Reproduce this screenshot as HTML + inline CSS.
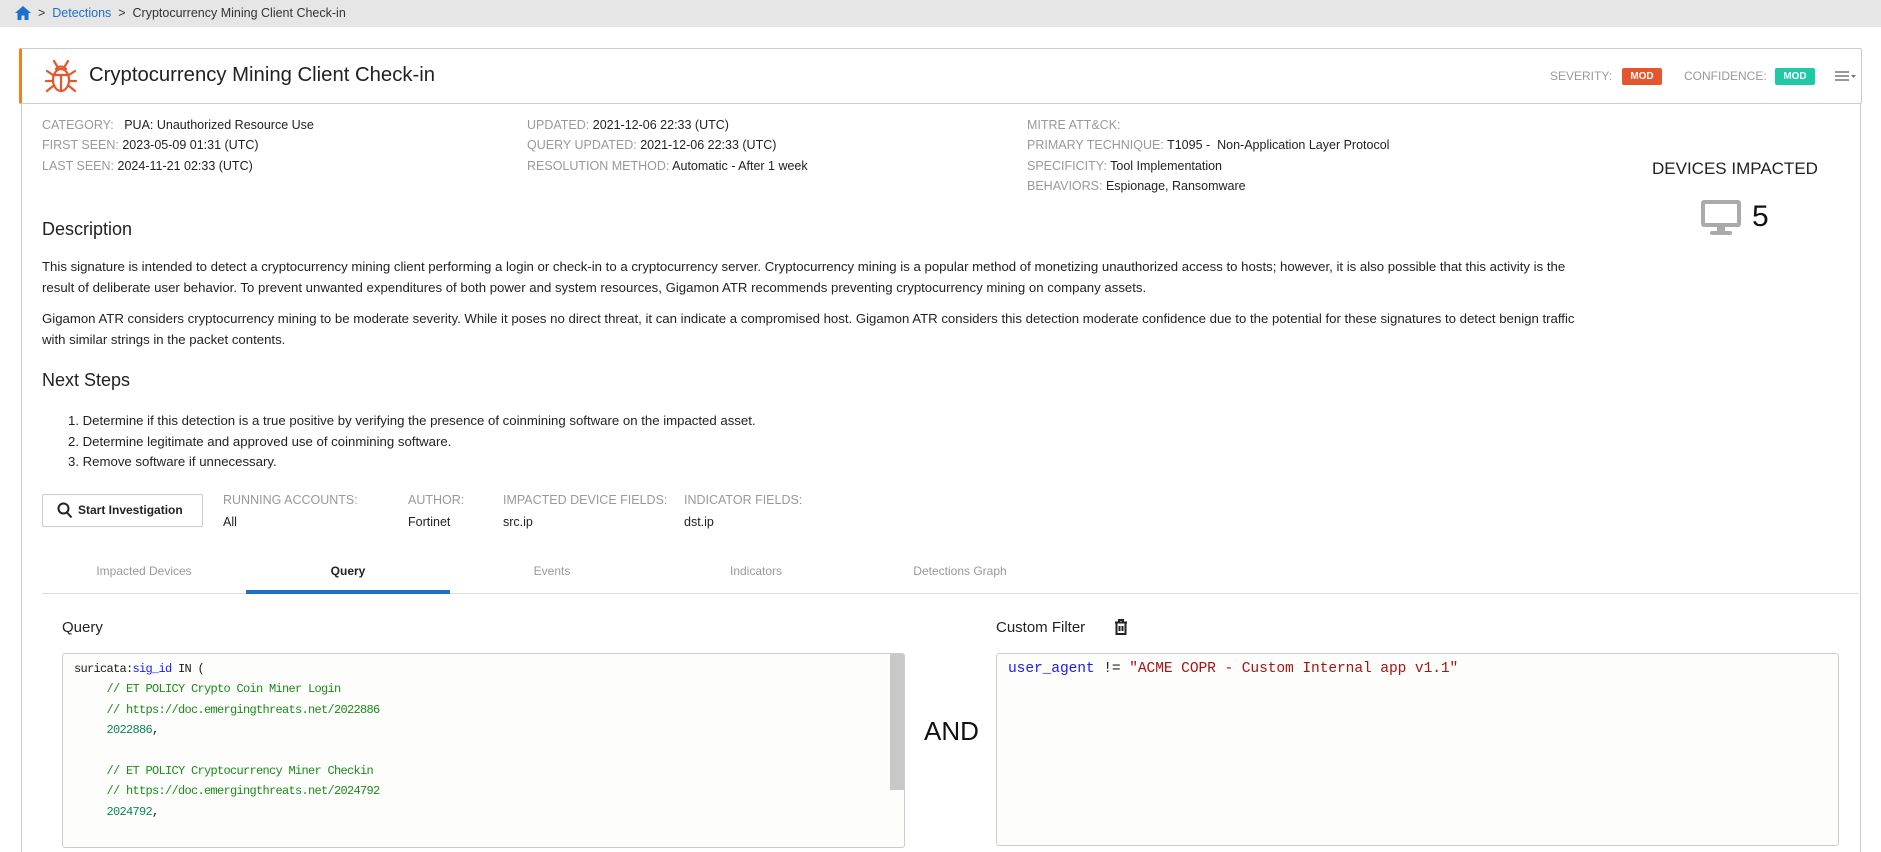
<!DOCTYPE html>
<html><head><meta charset="utf-8"><style>
*{margin:0;padding:0;box-sizing:border-box}
body{width:1881px;height:852px;overflow:hidden;background:#fff;font-family:"Liberation Sans",sans-serif;color:#222;position:relative}
.a{position:absolute;white-space:nowrap}
.lbl{color:#999}
.m{font-size:12.5px;line-height:16px}
.p{font-size:13.2px;color:#222}
.code{font-family:"Liberation Mono",monospace;font-size:12px;letter-spacing:-0.7px;color:#1a1a1a}
.g{color:#1b8a1b}
.tab{position:absolute;top:564px;width:204px;text-align:center;font-size:12px;color:#999}
</style></head><body>
<div class="a" style="left:0;top:0;width:1881px;height:27px;background:#e6e6e6"></div>
<svg class="a" style="left:14px;top:5px" width="18" height="16" viewBox="0 0 18 16"><path d="M9 1 L1 8 H3.5 V15 H7.5 V10.5 H10.5 V15 H14.5 V8 H17 Z" fill="#1e6fc9"/></svg>
<div class="a" style="left:38px;top:6px;font-size:12.5px;color:#333">&gt;&nbsp; <span style="color:#1e6fc9">Detections</span> &nbsp;&gt;&nbsp; Cryptocurrency Mining Client Check-in</div>

<div class="a" style="left:19px;top:48px;width:1843px;height:56px;border:1px solid #ccc;border-left:3px solid #f08020;border-radius:2px"></div>
<svg class="a" style="left:44px;top:58px" width="34" height="36" viewBox="0 0 34 36" fill="none" stroke="#e4572e" stroke-width="2.2" stroke-linecap="round"><ellipse cx="17" cy="22" rx="8" ry="11"/><path d="M9 17 H25 M17 17 V33 M12 11 Q17 6 22 11 M13 8 L10 3 M21 8 L24 3 M9 17 L3 13 M9 23 H2 M9 28 L3 33 M25 17 L31 13 M25 23 H32 M25 28 L31 33"/></svg>
<div class="a" style="left:89px;top:64px;font-size:20.3px;color:#222">Cryptocurrency Mining Client Check-in</div>
<div class="a" style="left:1550px;top:69px;font-size:12px;color:#999">SEVERITY:</div>
<div class="a" style="left:1622px;top:68px;width:40px;height:17px;background:#e4572e;border-radius:2px;color:#fff;font-size:10px;font-weight:bold;text-align:center;line-height:17px">MOD</div>
<div class="a" style="left:1684px;top:69px;font-size:12px;color:#999">CONFIDENCE:</div>
<div class="a" style="left:1775px;top:68px;width:40px;height:17px;background:#1fc9a6;border-radius:2px;color:#fff;font-size:10px;font-weight:bold;text-align:center;line-height:17px">MOD</div>
<svg class="a" style="left:1835px;top:70px" width="22" height="12"><path d="M0 2H14M0 6H14M0 10H14" stroke="#777" stroke-width="1.6"/><path d="M16 5H21L18.5 8Z" fill="#777"/></svg>

<div class="a" style="left:21px;top:103px;width:1px;height:749px;background:#ccc"></div>
<div class="a" style="left:1860px;top:103px;width:1px;height:749px;background:#ccc"></div>

<div class="a m" style="left:42px;top:117px"><span class="lbl">CATEGORY:</span>&nbsp;&nbsp; PUA: Unauthorized Resource Use</div>
<div class="a m" style="left:42px;top:137px"><span class="lbl">FIRST SEEN:</span> 2023-05-09 01:31 (UTC)</div>
<div class="a m" style="left:42px;top:158px"><span class="lbl">LAST SEEN:</span> 2024-11-21 02:33 (UTC)</div>
<div class="a m" style="left:527px;top:117px"><span class="lbl">UPDATED:</span> 2021-12-06 22:33 (UTC)</div>
<div class="a m" style="left:527px;top:137px"><span class="lbl">QUERY UPDATED:</span> 2021-12-06 22:33 (UTC)</div>
<div class="a m" style="left:527px;top:158px"><span class="lbl">RESOLUTION METHOD:</span> Automatic - After 1 week</div>
<div class="a m" style="left:1027px;top:117px"><span class="lbl">MITRE ATT&amp;CK:</span></div>
<div class="a m" style="left:1027px;top:137px"><span class="lbl">PRIMARY TECHNIQUE:</span> T1095 -&nbsp; Non-Application Layer Protocol</div>
<div class="a m" style="left:1027px;top:158px"><span class="lbl">SPECIFICITY:</span> Tool Implementation</div>
<div class="a m" style="left:1027px;top:178px"><span class="lbl">BEHAVIORS:</span> Espionage, Ransomware</div>

<div class="a" style="left:1652px;top:159px;font-size:17px;color:#222">DEVICES IMPACTED</div>
<svg class="a" style="left:1700px;top:199px" width="42" height="37" viewBox="0 0 42 37"><rect x="1" y="1" width="40" height="27" rx="3" fill="#aaa"/><rect x="5" y="5" width="32" height="19" fill="#fff"/><rect x="17" y="28" width="8" height="5" fill="#aaa"/><rect x="10" y="32" width="22" height="4" rx="2" fill="#aaa"/></svg>
<div class="a" style="left:1752px;top:200px;font-size:30px;color:#111">5</div>

<div class="a" style="left:42px;top:219px;font-size:18px">Description</div>
<div class="a p" style="left:42px;top:257px;line-height:20.5px">This signature is intended to detect a cryptocurrency mining client performing a login or check-in to a cryptocurrency server. Cryptocurrency mining is a popular method of monetizing unauthorized access to hosts; however, it is also possible that this activity is the<br>result of deliberate user behavior. To prevent unwanted expenditures of both power and system resources, Gigamon ATR recommends preventing cryptocurrency mining on company assets.</div>
<div class="a p" style="left:42px;top:309px;line-height:20.5px">Gigamon ATR considers cryptocurrency mining to be moderate severity. While it poses no direct threat, it can indicate a compromised host. Gigamon ATR considers this detection moderate confidence due to the potential for these signatures to detect benign traffic<br>with similar strings in the packet contents.</div>
<div class="a" style="left:42px;top:370px;font-size:18px">Next Steps</div>
<div class="a p" style="left:68px;top:411px;line-height:20.5px">1. Determine if this detection is a true positive by verifying the presence of coinmining software on the impacted asset.<br>2. Determine legitimate and approved use of coinmining software.<br>3. Remove software if unnecessary.</div>

<div class="a" style="left:42px;top:494px;width:161px;height:33px;border:1px solid #ccc;border-radius:2px"></div>
<svg class="a" style="left:57px;top:502px" width="16" height="17" viewBox="0 0 16 17" fill="none" stroke="#222" stroke-width="2"><circle cx="6.5" cy="6.5" r="5"/><path d="M10 10.5L14.5 15.5"/></svg>
<div class="a" style="left:78px;top:503px;font-size:12px;font-weight:bold">Start Investigation</div>
<div class="a m" style="left:223px;top:492px;color:#999">RUNNING ACCOUNTS:</div>
<div class="a m" style="left:223px;top:514px">All</div>
<div class="a m" style="left:408px;top:492px;color:#999">AUTHOR:</div>
<div class="a m" style="left:408px;top:514px">Fortinet</div>
<div class="a m" style="left:503px;top:492px;color:#999">IMPACTED DEVICE FIELDS:</div>
<div class="a m" style="left:503px;top:514px">src.ip</div>
<div class="a m" style="left:684px;top:492px;color:#999">INDICATOR FIELDS:</div>
<div class="a m" style="left:684px;top:514px">dst.ip</div>

<div class="tab" style="left:42px">Impacted Devices</div>
<div class="tab" style="left:246px;color:#222;font-weight:bold">Query</div>
<div class="tab" style="left:450px">Events</div>
<div class="tab" style="left:654px">Indicators</div>
<div class="tab" style="left:858px">Detections Graph</div>
<div class="a" style="left:42px;top:593px;width:1816px;height:1px;background:#ddd"></div>
<div class="a" style="left:246px;top:590px;width:204px;height:4px;background:#1e6fc9"></div>

<div class="a" style="left:62px;top:619px;font-size:15px">Query</div>
<div class="a" style="left:996px;top:619px;font-size:15px">Custom Filter</div>
<svg class="a" style="left:1114px;top:619px" width="14" height="16" viewBox="0 0 14 16" fill="none" stroke="#222" stroke-width="2"><path d="M1 3.5H13M5 3.5V1H9V3.5M2.5 4V15H11.5V4M5.5 7V12M8.5 7V12"/></svg>

<div class="a" style="left:62px;top:653px;width:843px;height:195px;border:1px solid #ccc;border-radius:3px;background:#fdfdfc"></div>
<div class="a" style="left:890px;top:654px;width:14px;height:136px;background:#c8c8c8"></div>
<div class="a code" style="left:74px;top:659px;line-height:20.4px">suricata:<span style="color:#1a1aff">sig_id</span> IN (<br><span class="g">&nbsp;&nbsp;&nbsp;&nbsp;&nbsp;// ET POLICY Crypto Coin Miner Login<br>&nbsp;&nbsp;&nbsp;&nbsp;&nbsp;// https://doc.emergingthreats.net/2022886</span><br><span style="color:#098658">&nbsp;&nbsp;&nbsp;&nbsp;&nbsp;2022886</span>,<br><br><span class="g">&nbsp;&nbsp;&nbsp;&nbsp;&nbsp;// ET POLICY Cryptocurrency Miner Checkin<br>&nbsp;&nbsp;&nbsp;&nbsp;&nbsp;// https://doc.emergingthreats.net/2024792</span><br><span style="color:#098658">&nbsp;&nbsp;&nbsp;&nbsp;&nbsp;2024792</span>,</div>

<div class="a" style="left:924px;top:716px;font-size:26px;color:#111">AND</div>

<div class="a" style="left:996px;top:653px;width:843px;height:193px;border:1px solid #ccc;border-radius:3px;background:#fdfdfc"></div>
<div class="a" style="left:1008px;top:661px;font-family:'Liberation Mono',monospace;font-size:14.6px;letter-spacing:-0.1px"><span style="color:#1a1aff">user_agent</span> != <span style="color:#a31515">"ACME COPR - Custom Internal app v1.1"</span></div>
</body></html>
